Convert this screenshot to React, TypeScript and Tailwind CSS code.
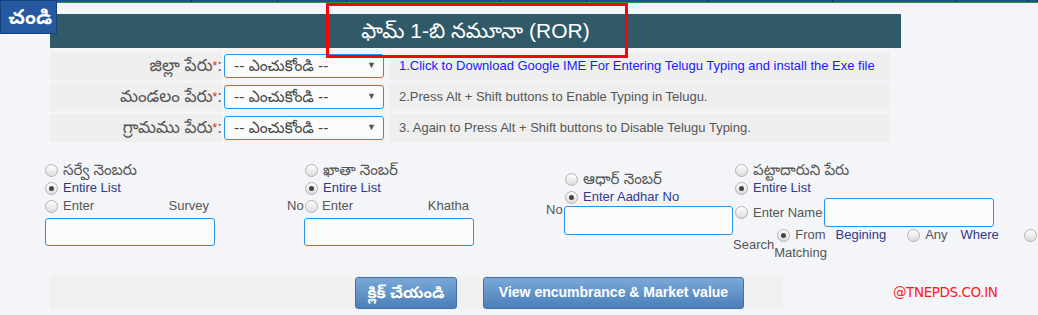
import React from "react";

const FONT = "font-['Liberation_Sans','Noto_Sans','Noto_Sans_Telugu','Lohit_Telugu',sans-serif]";

function Radio({ checked = false }: { checked?: boolean }) {
  return (
    <span className="inline-flex items-center justify-center w-[13px] h-[13px] rounded-full border border-[#b3b3b3] bg-gradient-to-b from-[#ffffff] to-[#dcdcdc] shrink-0">
      {checked && <span className="w-[5px] h-[5px] rounded-full bg-[#444]" />}
    </span>
  );
}

function FakeSelect() {
  return (
    <div className="w-[160px] h-[24px] mx-[2px] rounded-[3px] border border-[#2a93e8] bg-[#fbfbfb] flex items-center justify-between pl-[9px] pr-[7px] text-[15.5px] text-[#444]">
      <span>-- ఎంచుకోండి --</span>
      <span className="text-[9px] text-[#555]">▼</span>
    </div>
  );
}

const ROWS = [
  { label: "జిల్లా పేరు", info: "1.Click to Download Google IME For Entering Telugu Typing and install the Exe file", blue: true },
  { label: "మండలం పేరు", info: "2.Press Alt + Shift buttons to Enable Typing in Telugu.", blue: false },
  { label: "గ్రామము పేరు", info: "3. Again to Press Alt + Shift buttons to Disable Telugu Typing.", blue: false },
];

function Line({ children, className = "" }: { children: React.ReactNode; className?: string }) {
  return <div className={`flex items-center h-[18px] whitespace-nowrap ${className}`}>{children}</div>;
}

export default function App() {
  return (
    <div className={`relative w-[1038px] h-[315px] bg-[#f4f5f8] overflow-hidden ${FONT}`}>
      {/* top nav edge */}
      <div className="h-[2px] bg-[#1d4f9a] flex">
        {[192, 86, 69, 153, 87, 121, 125, 124, 71, 10].map((w, i) => (
          <div key={i} style={{ width: w }} className="h-full border-r border-[#0e2f60]" />
        ))}
      </div>
      <div className="h-[1px] bg-[#1f9a4a]" />

      {/* title bar */}
      <div className="ml-[50px] mt-[11px] w-[851px] h-[34px] bg-[#315a69] flex items-center justify-center text-white text-[21px]">
        ఫామ్ 1-బి నమూనా (ROR)
      </div>

      {/* select rows */}
      <div className="ml-[50px] mt-[4px] flex flex-col gap-[3px]">
        {ROWS.map((r) => (
          <div key={r.label} className="flex items-center h-[28px]">
            <div className="w-[172px] h-full bg-[#efefef] flex items-center justify-end text-[17px] text-[#555] whitespace-nowrap">
              {r.label}
              <span className="text-[#e0202a] text-[12px] self-start mt-[5px]">*</span>:
            </div>
            <FakeSelect />
            <div className={`ml-[3px] w-[501px] h-full bg-[#efefef] flex items-center pl-[10px] text-[13px] ${r.blue ? "text-[#1a1aff]" : "text-[#555]"}`}>
              {r.info}
            </div>
          </div>
        ))}
      </div>

      {/* search options */}
      <div className="mt-[19px] h-[115px] flex text-[13px] text-[#555]">
        <div className="ml-[45px] w-[242px] shrink-0 flex flex-col">
          <Line className="gap-[5px] text-[15px]"><Radio />సర్వే నెంబరు</Line>
          <Line className="gap-[5px] text-[#2e3a8c]"><Radio checked />Entire List</Line>
          <Line className="gap-[5px]">
            <Radio />
            <div className="flex justify-between w-[146px]"><span>Enter</span><span>Survey</span></div>
          </Line>
          <input className="mt-[3px] w-[170px] h-[28px] rounded-[3px] border border-[#2a93e8] bg-[#fbfbfb]" />
        </div>

        <div className="w-[259px] shrink-0 flex flex-col">
          <Line className="gap-[5px] pl-[18px] text-[15px]"><Radio />ఖాతా నెంబర్</Line>
          <Line className="gap-[5px] pl-[18px] text-[#2e3a8c]"><Radio checked />Entire List</Line>
          <Line>
            <span className="w-[18px]">No</span>
            <Radio />
            <div className="ml-[4px] flex justify-between w-[147px]"><span>Enter</span><span>Khatha</span></div>
          </Line>
          <input className="mt-[3px] ml-[17px] w-[170px] h-[28px] rounded-[3px] border border-[#2a93e8] bg-[#fbfbfb]" />
        </div>

        <div className="w-[187px] shrink-0 flex flex-col pt-[9px]">
          <Line className="gap-[5px] pl-[19px] text-[15px]"><Radio />ఆధార్ నెంబర్</Line>
          <Line className="gap-[5px] pl-[19px] text-[#2e3a8c]"><Radio checked />Enter Aadhar No</Line>
          <div className="flex items-start">
            <span className="w-[19px] -mt-[6px]">No</span>
            <input className="w-[169px] h-[29px] rounded-[3px] border border-[#2a93e8] bg-[#fbfbfb]" />
          </div>
        </div>

        <div className="w-[305px] shrink-0 flex flex-col">
          <Line className="gap-[5px] pl-[2px] text-[15px]"><Radio />పట్టాదారుని పేరు</Line>
          <Line className="gap-[5px] pl-[2px] text-[#2e3a8c]"><Radio checked />Entire List</Line>
          <div className="pl-[2px] mt-[1px] flex items-center gap-[5px] whitespace-nowrap">
            <Radio />
            <span>Enter Name</span>
            <input className="-ml-[3px] w-[170px] h-[29px] rounded-[3px] border border-[#2a93e8] bg-[#fbfbfb]" />
          </div>
          <div className="flex items-start -mt-[1px] whitespace-nowrap">
            <span className="mt-[9px]">Search</span>
            <div className="flex flex-col">
              <div className="flex items-center h-[18px] text-[#2e3a8c]">
                <span className="ml-[3px] flex"><Radio checked /></span>
                <span className="ml-[5px] text-[#555]">From</span>
                <span className="ml-[10px]">Begining</span>
                <span className="ml-[21px] flex"><Radio /></span>
                <span className="ml-[5px] text-[#555]">Any</span>
                <span className="ml-[13px]">Where</span>
                <span className="ml-[25px] flex"><Radio /></span>
              </div>
              <span className="leading-[18px]">Matching</span>
            </div>
          </div>
        </div>
      </div>

      {/* buttons */}
      <div className="flex items-center">
        <div className="ml-[50px] w-[733px] h-[33px] bg-[#f0f0f0] flex items-center">
          <button className="ml-[305px] w-[102px] h-[32px] rounded-[3px] border border-[#3f72aa] bg-gradient-to-b from-[#7aa9d8] to-[#4b7fb9] text-white font-bold text-[15.5px]">
            క్లిక్ చేయండి
          </button>
          <button className="ml-[26px] w-[261px] h-[32px] rounded-[3px] border border-[#3f72aa] bg-gradient-to-b from-[#7aa9d8] to-[#4b7fb9] text-white font-bold text-[14px]">
            View encumbrance &amp; Market value
          </button>
        </div>
        <span className="ml-[110px] text-[13.5px] text-[#ff1a1a] font-['DejaVu_Sans',sans-serif] tracking-[-0.4px]">@TNEPDS.CO.IN</span>
      </div>

      {/* overlays */}
      <div className="absolute left-0 top-0 w-[57px] h-[34px] bg-[#255aa0] border border-[#173f7a] flex items-center justify-end pr-[4px] text-white font-bold text-[20px] whitespace-nowrap overflow-hidden">
        చండి
      </div>
      <div className="absolute left-[326px] top-[3px] w-[302px] h-[55px] border-[3px] border-[#ff0000]" />
    </div>
  );
}
